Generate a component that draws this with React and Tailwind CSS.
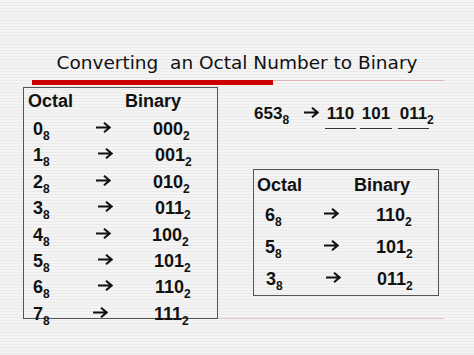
import React from "react";

const leftRows = [
  { d: "0", b: "000", cell: "w-[62px]", gap: "ml-[42px]" },
  { d: "1", b: "001", cell: "w-[64px]", gap: "ml-[42px]" },
  { d: "2", b: "010", cell: "w-[62px]", gap: "ml-[42px]" },
  { d: "3", b: "011", cell: "w-[64px]", gap: "ml-[42px]" },
  { d: "4", b: "100", cell: "w-[62px]", gap: "ml-[41px]" },
  { d: "5", b: "101", cell: "w-[64px]", gap: "ml-[41px]" },
  { d: "6", b: "110", cell: "w-[64px]", gap: "ml-[42px]" },
  { d: "7", b: "111", cell: "w-[59px]", gap: "ml-[46px]" },
];

const rightRows = [
  { d: "6", b: "110", pad: "pl-[11px]", cell: "w-[58px]", gap: "ml-[37px]" },
  { d: "5", b: "101", pad: "pl-[11px]", cell: "w-[58px]", gap: "ml-[37px]" },
  { d: "3", b: "011", pad: "pl-[12px]", cell: "w-[59px]", gap: "ml-[36px]" },
];

function Arrow({ className = "" }) {
  return (
    <svg width="16" height="11" viewBox="0 0 16 11" className={className}>
      <path d="M1 5.5H14.5M9 0.8L14.6 5.5L9 10.2" fill="none" stroke="#111" strokeWidth="2" />
    </svg>
  );
}

function Sub({ children }) {
  return <span className="text-[12px] leading-none align-[-5px]">{children}</span>;
}

export default function App() {
  return (
    <div className="w-[474px] h-[355px] overflow-hidden text-[#111] bg-[repeating-linear-gradient(#f4f4f4_0px,#f4f4f4_2px,#eaeaea_2px,#eaeaea_3px)]">
      <h1 className="pt-[51px] h-[75px] text-center text-[18.5px] leading-[24px] font-normal font-['DejaVu_Sans',sans-serif] whitespace-pre">
        Converting  an Octal Number to Binary
      </h1>
      <div className="mt-[5px] ml-[32px] flex items-start h-[7px]">
        <div className="w-[241px] h-[5px] bg-[#cc0000]" />
        <div className="w-[171px] h-px bg-[#e6b4b4]" />
      </div>

      <div className="ml-[23px] w-[421px] flex items-start border-b border-[#e8c4c4] font-['Liberation_Sans',Arial,sans-serif] font-bold">
        <div className="w-[195px] h-[232px] -mb-px border border-[#555] text-[18px] leading-[26px]">
          <div className="flex h-[28px] pl-[4px]">
            <span className="w-[97px]">Octal</span>
            <span>Binary</span>
          </div>
          {leftRows.map((r) => (
            <div key={r.d} className="flex items-start h-[26.4px] pl-[9px]">
              <span className={r.cell}>
                {r.d}
                <Sub>8</Sub>
              </span>
              <Arrow className="mt-[6px]" />
              <span className={r.gap}>
                {r.b}
                <Sub>2</Sub>
              </span>
            </div>
          ))}
        </div>

        <div className="flex-1 pl-[35px]">
          <div className="mt-[16px] ml-[1px] flex items-start text-[17px] leading-[22px]">
            <span className="w-[49px]">
              653
              <Sub>8</Sub>
            </span>
            <Arrow className="mt-[4px]" />
            <span className="ml-[6px] w-[31px] h-[26px] text-center border-b-[1.5px] border-[#333]">110</span>
            <span className="ml-[4px] w-[32px] h-[26px] text-center border-b-[1.5px] border-[#333]">101</span>
            <span className="ml-[6px] w-[31px] h-[26px] text-center border-b-[1.5px] border-[#333]">011</span>
            <span className="-ml-[2px]">
              <Sub>2</Sub>
            </span>
          </div>

          <div className="mt-[40px] w-[186px] h-[127px] border border-[#555] text-[18px] leading-[26px]">
            <div className="flex h-[32px] pt-[2px] pl-[3px]">
              <span className="w-[97px]">Octal</span>
              <span>Binary</span>
            </div>
            {rightRows.map((r) => (
              <div key={r.d} className={`flex items-start h-[32px] ${r.pad}`}>
                <span className={r.cell}>
                  {r.d}
                  <Sub>8</Sub>
                </span>
                <Arrow className="mt-[6px]" />
                <span className={r.gap}>
                  {r.b}
                  <Sub>2</Sub>
                </span>
              </div>
            ))}
          </div>
        </div>
      </div>
    </div>
  );
}
